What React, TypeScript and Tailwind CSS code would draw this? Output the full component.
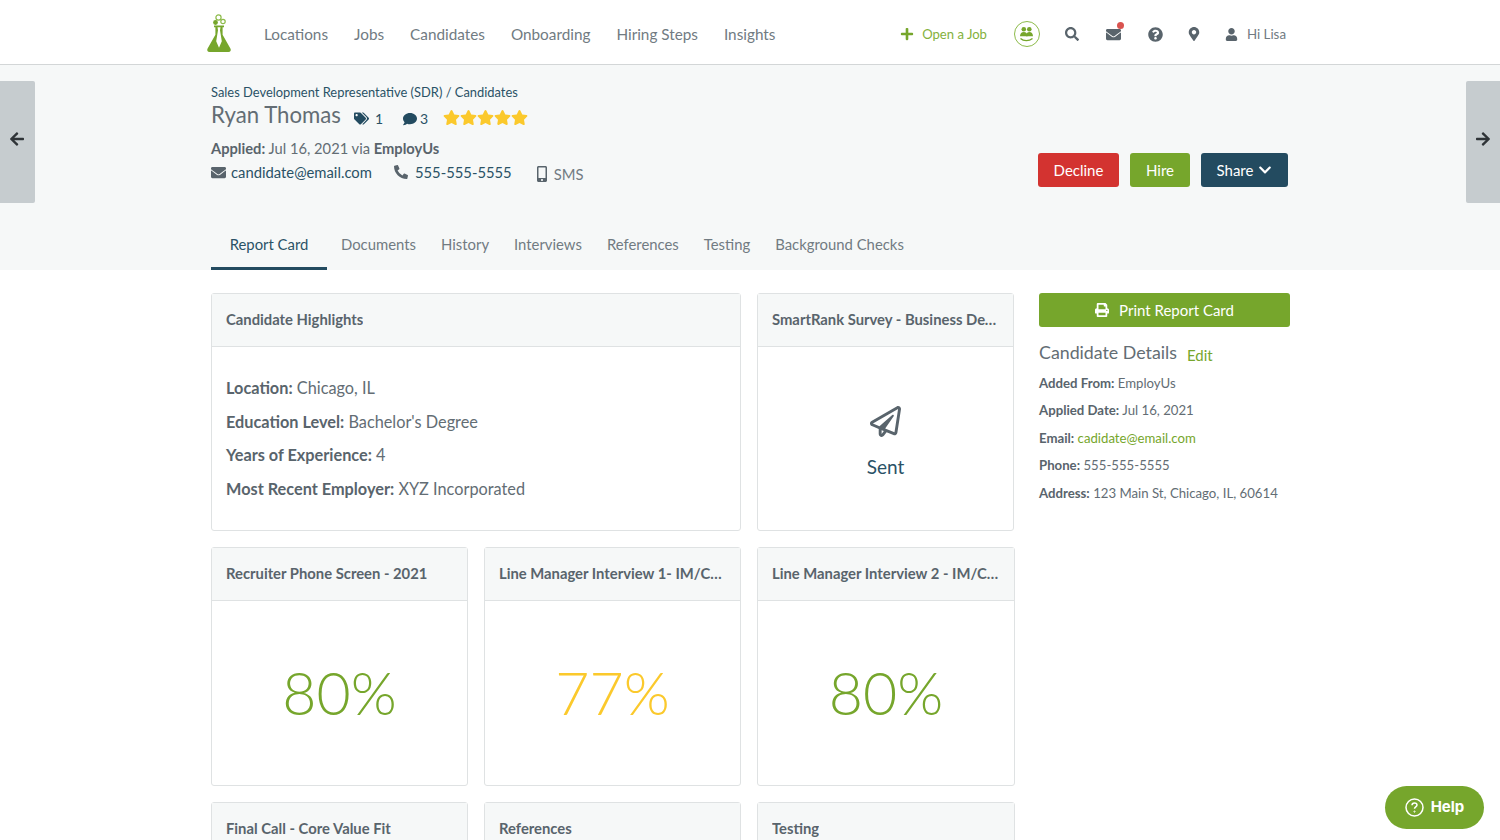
import React from 'react';
import {
  FaArrowLeft,
  FaArrowRight,
  FaChevronDown,
  FaComment,
  FaEnvelope,
  FaMapMarkerAlt,
  FaMobileAlt,
  FaPhoneAlt,
  FaPlus,
  FaPrint,
  FaQuestionCircle,
  FaRegPaperPlane,
  FaSearch,
  FaStar,
  FaTags,
  FaUser,
} from 'react-icons/fa';

const navItems = ['Locations', 'Jobs', 'Candidates', 'Onboarding', 'Hiring Steps', 'Insights'];
const tabs = ['Documents', 'History', 'Interviews', 'References', 'Testing', 'Background Checks'];

const Logo = () => (
  <svg width="28" height="40" viewBox="0 0 28 40" className="block">
    <circle cx="13.500" cy="3.500" r="2.600" fill="none" stroke="#8dbb4a" strokeWidth="1.200" />
    <circle cx="18" cy="7.500" r="2.200" fill="none" stroke="#8dbb4a" strokeWidth="1.200" />
    <circle cx="10.500" cy="8.500" r="2.400" fill="#76a62c" />
    <path
      d="M9 11.500h10v1.800h-1.400v7.500l7.800 13.600c1 1.800 0 3.600-2 3.600H4.600c-2 0-3-1.800-2-3.600l7.800-13.600v-7.500H9z"
      fill="#76a62c"
    />
    <path d="M12.500 13.300h3l-.5 3 1.800 11-2.800 6.500-2.800-6.500 1.800-11z" fill="#fff" />
  </svg>
);

const TeamIcon = () => (
  <div className="flex h-[26px] w-[26px] items-center justify-center rounded-full border border-[#8dbb4a]">
    <svg width="17" height="17" viewBox="0 0 17 17">
      <circle cx="5.800" cy="3.300" r="2.300" fill="#76a62c" />
      <circle cx="11.300" cy="3.300" r="2.300" fill="#76a62c" />
      <path d="M2 10.300c0-2.800 1.600-4.300 3.800-4.300s3.800 1.500 3.800 4.300z" fill="#76a62c" />
      <path d="M8 10.300c0-2.800 1.400-4.300 3.400-4.300s3.600 1.500 3.600 4.300z" fill="#76a62c" />
      <path d="M2.500 12.500c3 2.800 8.500 2.800 12 0" fill="none" stroke="#76a62c" strokeWidth="1.400" />
    </svg>
  </div>
);

const Card = ({
  title,
  className,
  children,
}: {
  title: string;
  className?: string;
  children?: React.ReactNode;
}) => (
  <div className={`flex min-w-0 flex-col rounded-[3px] border border-[#dfe2e3] bg-white ${className ?? ''}`}>
    <div className="flex h-[53px] shrink-0 items-center border-b border-[#dfe2e3] bg-[#f6f8f8] pb-[1px] pl-[14px] pr-[14px]">
      <span className="truncate text-[14.800px] font-bold text-[#59646c]">{title}</span>
    </div>
    {children}
  </div>
);

const ScoreCard = ({ title, score, color }: { title: string; score: string; color: string }) => (
  <Card title={title} className="h-[239px]">
    <div className={`flex flex-1 items-center justify-center pt-[1px] text-[59px] font-light ${color}`}>{score}</div>
  </Card>
);

const Highlight = ({ label, value }: { label: string; value: string }) => (
  <div className="text-[16.300px] leading-[24px] text-[#636d74]">
    <span className="font-bold text-[#59646c]">{label}</span> {value}
  </div>
);

const Detail = ({ label, children }: { label: string; children: React.ReactNode }) => (
  <div className="whitespace-nowrap text-[13.200px] leading-[20px] text-[#636d74]">
    <span className="font-bold text-[#59646c]">{label}</span> {children}
  </div>
);

export default function App() {
  return (
    <div className="relative h-[840px] overflow-hidden bg-white font-['Lato','Noto_Sans',sans-serif] text-[#636d74]">
      {/* Top nav */}
      <header className="flex h-[65px] items-center border-b border-[#d3d6d7] bg-white pl-[205px] pr-[214px] pt-[4px]">
        <div className="w-[28px]">
          <Logo />
        </div>
        <nav className="ml-[31px] flex gap-[26px] text-[15.300px] text-[#717b82]">
          {navItems.map((item) => (
            <span key={item}>{item}</span>
          ))}
        </nav>
        <div className="ml-auto flex items-center text-[#59646c]">
          <FaPlus className="text-[14px] text-[#76a62c]" />
          <span className="ml-[8px] mt-[1px] text-[13.100px] text-[#84b13c]">Open a Job</span>
          <div className="ml-[27px]">
            <TeamIcon />
          </div>
          <FaSearch className="ml-[25px] text-[14px]" />
          <div className="relative ml-[27px]">
            <FaEnvelope className="text-[15px]" />
            <span className="absolute -right-[3px] -top-[5px] h-[7px] w-[7px] rounded-full bg-[#d9534f]" />
          </div>
          <FaQuestionCircle className="ml-[27px] text-[15px]" />
          <FaMapMarkerAlt className="ml-[24px] text-[14px]" />
          <FaUser className="ml-[24px] text-[13px]" />
          <span className="ml-[9px] mt-[1px] text-[13.300px] text-[#717b82]">Hi Lisa</span>
        </div>
      </header>

      {/* Candidate summary */}
      <section className="h-[205px] bg-[#f6f8f8] px-[211px] pt-[18px]">
        <div className="text-[12.900px] leading-[18px] text-[#2a5266]">Sales Development Representative (SDR) / Candidates</div>
        <div className="mt-[1px] flex h-[28px] items-center">
          <span className="mb-[3px] text-[22.200px] text-[#636d74]">Ryan Thomas</span>
          <FaTags className="ml-[13px] mt-[5px] text-[15px] text-[#234b60]" />
          <span className="ml-[6px] mt-[5px] text-[14px] text-[#2a5266]">1</span>
          <FaComment className="ml-[20px] mt-[5px] text-[14px] text-[#234b60]" />
          <span className="ml-[3px] mt-[5px] text-[14px] text-[#2a5266]">3</span>
          <div className="ml-[15px] mt-[3px] flex text-[17px] text-[#fbc92c]">
            {[1, 2, 3, 4, 5].map((n) => (
              <FaStar key={n} />
            ))}
          </div>
        </div>
        <div className="flex items-start justify-between">
          <div>
            <div className="mt-[8px] text-[14.700px] leading-[20px] text-[#636d74]">
              <span className="font-bold text-[#59646c]">Applied:</span> Jul 16, 2021 via{' '}
              <span className="font-bold text-[#59646c]">EmployUs</span>
            </div>
            <div className="mt-[2px] flex h-[24px] items-center text-[14.800px] text-[#2a5266]">
              <FaEnvelope className="text-[15px] text-[#59646c]" />
              <span className="ml-[5px]">candidate@email.com</span>
              <FaPhoneAlt className="ml-[22px] text-[14px] text-[#59646c]" />
              <span className="ml-[7px] mt-[1px]">555-555-5555</span>
              <FaMobileAlt className="ml-[22px] mt-[3px] text-[16px] text-[#59646c]" />
              <span className="ml-[4px] mt-[4px] text-[#717b82]">SMS</span>
            </div>
          </div>
          <div className="mr-[1px] mt-[23px] flex gap-[11px] text-[15px] text-white">
            <button className="h-[34px] w-[81px] rounded-[3px] bg-[#d33330]">Decline</button>
            <button className="h-[34px] w-[60px] rounded-[3px] bg-[#76a62c]">Hire</button>
            <button className="flex h-[34px] w-[87px] items-center justify-center gap-[5px] rounded-[3px] bg-[#234b60]">
              Share <FaChevronDown className="text-[14px]" />
            </button>
          </div>
        </div>
        <div className="mt-[34px] flex h-[49px] items-start text-[14.870px] text-[#717b82]">
          <div className="h-[49px] w-[116px] border-b-[3px] border-[#234b60] pt-[12px] text-center text-[#2a5266]">
            Report Card
          </div>
          <div className="ml-[14px] flex gap-[25px] pt-[12px]">
            {tabs.map((tab) => (
              <span key={tab}>{tab}</span>
            ))}
          </div>
        </div>
      </section>

      {/* Body */}
      <main className="flex gap-[24px] px-[211px] pt-[23px]">
        <div className="grid w-[804px] shrink-0 grid-cols-[257px_257px_258px] gap-[16px]">
          <Card title="Candidate Highlights" className="col-span-2 h-[238px]">
            <div className="flex flex-col gap-[9.600px] px-[14px] pt-[29px]">
              <Highlight label="Location:" value="Chicago, IL" />
              <Highlight label="Education Level:" value="Bachelor's Degree" />
              <Highlight label="Years of Experience:" value="4" />
              <Highlight label="Most Recent Employer:" value="XYZ Incorporated" />
            </div>
          </Card>
          <Card title="SmartRank Survey - Business Development" className="mr-[1px] h-[238px]">
            <div className="flex flex-1 flex-col items-center pt-[59px]">
              <FaRegPaperPlane className="text-[31px] text-[#59646c]" />
              <span className="mt-[16px] text-[19px] text-[#2a5266]">Sent</span>
            </div>
          </Card>
          <ScoreCard title="Recruiter Phone Screen - 2021" score="80%" color="text-[#76a62c]" />
          <ScoreCard title="Line Manager Interview 1- IM/Cultural Fit" score="77%" color="text-[#fbc92c]" />
          <ScoreCard title="Line Manager Interview 2 - IM/Cultural Fit" score="80%" color="text-[#76a62c]" />
          <Card title="Final Call - Core Value Fit" className="h-[239px]" />
          <Card title="References" className="h-[239px]" />
          <Card title="Testing" className="h-[239px]" />
        </div>

        <aside className="w-[251px] shrink-0">
          <button className="flex h-[34px] w-full items-center justify-center gap-[10px] rounded-[3px] bg-[#76a62c] text-[15px] text-white">
            <FaPrint className="text-[14px]" /> Print Report Card
          </button>
          <div className="mt-[12px] flex items-baseline">
            <span className="text-[17.800px] text-[#636d74]">Candidate Details</span>
            <span className="ml-[10px] translate-y-[2px] text-[15px] text-[#76a62c]">Edit</span>
          </div>
          <div className="mt-[7px] flex flex-col gap-[7.500px]">
            <Detail label="Added From:">EmployUs</Detail>
            <Detail label="Applied Date:">Jul 16, 2021</Detail>
            <Detail label="Email:">
              <span className="text-[#76a62c]">cadidate@email.com</span>
            </Detail>
            <Detail label="Phone:">555-555-5555</Detail>
            <Detail label="Address:">123 Main St, Chicago, IL, 60614</Detail>
          </div>
        </aside>
      </main>

      {/* Floating overlays */}
      <div className="absolute left-0 top-[81px] flex h-[122px] w-[35px] items-center justify-center rounded-r-[2px] bg-[#c6cccf] pb-[6px] pr-[2px] text-[16px] text-[#2f3438]">
        <FaArrowLeft />
      </div>
      <div className="absolute right-0 top-[81px] flex h-[122px] w-[34px] items-center justify-center rounded-l-[2px] bg-[#c6cccf] pb-[6px] text-[16px] text-[#2f3438]">
        <FaArrowRight />
      </div>
      <div className="absolute left-[1385px] top-[786px] flex h-[43px] w-[99px] items-center justify-center gap-[7px] rounded-full bg-[#76a62c] font-['Inter',sans-serif] text-[15px] font-bold text-white">
        <svg width="19" height="19" viewBox="0 0 19 19" fill="none" stroke="#fff">
          <circle cx="9.500" cy="9.500" r="8.500" strokeWidth="1.500" />
          <path d="M7 7.300c0-1.500 1.100-2.400 2.500-2.400s2.500.9 2.500 2.200c0 1.800-2.500 1.900-2.500 3.700" strokeWidth="1.500" />
          <circle cx="9.500" cy="13.600" r="0.600" strokeWidth="1" />
        </svg>
        Help
      </div>
    </div>
  );
}
